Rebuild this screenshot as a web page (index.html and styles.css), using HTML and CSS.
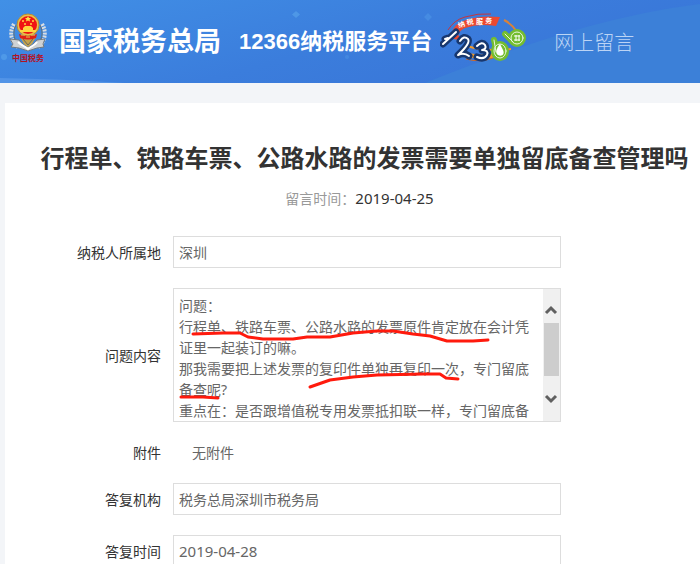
FILE: index.html
```html
<!DOCTYPE html>
<html lang="zh-CN">
  <head>
    <meta charset="UTF-8" />
    <meta name="viewport" content="width=device-width, initial-scale=1.0" />
    <title>网上留言 - 12366纳税服务平台</title>
    <link rel="stylesheet" href="styles.css">
  </head>
  <body>
    <header class="header">
      <!-- Background waves -->
      <svg class="header-bg" viewBox="0 0 700 83" preserveAspectRatio="none" aria-hidden="true">
        <path d="M425 83 Q520 45 590 26 Q650 10 700 4 V83 Z" fill="#3c80d8" />
        <path d="M0 78 Q60 79 125 83 H0 Z" fill="#5294e7" />
        <g fill="#5aa5ec" opacity="0.6">
          <circle cx="4" cy="57" r="3" />
          <path d="M296 11l4 3.500-4 3.500-4-3.500z" />
          <path d="M428 13l4 4-4 4-4-4z" opacity="0.6" />
          <circle cx="347" cy="57" r="2" opacity="0.5" />
        </g>
      </svg>

      <svg class="emblem" width="40" height="56" viewBox="0 0 40 56" role="img" aria-label="中国税务">
        <path d="M6 13C1 21 3 31 10 36M34 13c5 8 3 18-4 23" fill="none" stroke="#d9dde2" stroke-width="4" stroke-dasharray="2 1" />
        <path d="M8 14C4 22 6 30 12 34M32 14c4 8 2 16-4 20" fill="none" stroke="#69706f" stroke-width="1" />
        <path d="M2 28l9 1c3 4 6 6 9 7 3-1 6-3 9-7l8-1-2 5 1 3-7 1-9 3-9-3-8-1 2-3z" fill="#cfd2d4" stroke="#707880" stroke-width="1" />
        <path d="M10 31c4 4 7 4 10 7 3-3 6-3 9-7" fill="none" stroke="#fff" stroke-width="2" />
        <path d="M12 26h16l-4 7-4 3-4-3z" fill="#c5a24c" />
        <path d="M15 28l5 6 5-6" fill="none" stroke="#666b62" stroke-width="1" />
        <circle cx="20" cy="14" r="11" fill="#eac04b" stroke="#ba8c32" stroke-width="1" />
        <circle cx="20" cy="14" r="9" fill="#f01414" />
        <path d="M20 5l1 2h2l-1.500 1.500.5 2-2-1-2 1 .5-2L17 7h2z" fill="#ffe04a" />
        <g fill="#ffd53e">
          <circle cx="15" cy="10" r="1" />
          <circle cx="25" cy="10" r="1" />
          <circle cx="17" cy="13" r="1" />
          <circle cx="23" cy="13" r="1" />
          <path d="M15 17l2-2h6l2 2v2h3v2H12v-2h3z" />
        </g>
        <path d="M11 23q9 4 18 0l-1 4q-8 3-16 0z" fill="#dd2118" />
        <path d="M13 24h4M23 24h4M18 26h4" stroke="#efc34a" stroke-width="1" />
        <text class="emblem-text" x="20" y="50" text-anchor="middle">中国税务</text>
      </svg>

      <span class="org-name">国家税务总局</span>
      <span class="platform-name">12366纳税服务平台</span>

      <svg class="hotline" width="86" height="52" viewBox="0 0 86 52" role="img" aria-label="纳税服务 12366">
        <path d="M20 37q20 11 46 0l1 5q-22 9-43 2z" fill="#f39a28" />
        <path d="M27 34q18 6 44 3" fill="none" stroke="#f39a28" stroke-width="2" />
        <path d="M26 47q14 4 27-1" fill="none" stroke="#c96a2c" stroke-width="1" />
        <path d="M64 8Q72 12 77 20" fill="none" stroke="#d9823a" stroke-width="2" />
        <path d="M12 20Q15 11 26 8 41 3 60 5L56 14Q39 11 25 16 20 18 18 23L24 29 14 27Z" fill="#ec4930" />
        <path d="M8 18Q14 8 25 5 38 1 51 2" fill="none" stroke="#c8343b" stroke-width="1" />
        <g class="hotline-label">
          <text x="19" y="16" transform="rotate(-20 19 16)">纳</text>
          <text x="27" y="13" transform="rotate(-10 27 13)">税</text>
          <text x="36" y="12">服</text>
          <text x="45" y="11" transform="rotate(5 45 11)">务</text>
        </g>
        <g class="digit">
          <path d="M3 32L16 20M8 26L5 27" />
          <path d="M20 29q4-6 8-2 3 4-10 16 6-3 11 1" />
          <path d="M37 34q5-5 8-1 2 4-3 5 7 0 5 5-3 5-10 2" />
        </g>
        <g class="digit-inner">
          <path d="M3 32L16 20M8 26L5 27" />
          <path d="M20 29q4-6 8-2 3 4-10 16 6-3 11 1" />
          <path d="M37 34q5-5 8-1 2 4-3 5 7 0 5 5-3 5-10 2" />
        </g>
        <!-- The two green sixes -->
        <g class="six">
          <path d="M54 28L57 40" />
          <ellipse cx="60" cy="39" rx="6" ry="7" />
          <path d="M65 22L73 30" />
          <circle cx="77" cy="26" r="6" />
        </g>
        <g class="six-inner">
          <path d="M54 28L56 40" />
          <ellipse cx="60" cy="39" rx="6" ry="7" />
          <path d="M65 22L73 30" />
          <circle cx="77" cy="26" r="6" />
        </g>
        <path d="M60 32c-4 5-5 9-2 11 4 2 7-1 5-5z" fill="#fff" />
        <path d="M74 24h6M74 28h6M76 23v6M79 23v6" fill="none" stroke="#fff" stroke-width="1" />
      </svg>

      <a href="#" class="section-link">网上留言</a>
    </header>

    <main class="card">
      <h1 class="title">行程单、铁路车票、公路水路的发票需要单独留底备查管理吗</h1>
      <p class="meta">留言时间：<time class="meta-date" datetime="2019-04-25">2019-04-25</time></p>

      <form class="detail-form">
        <label for="area">纳税人所属地</label>
        <input type="text" id="area" class="field" value="深圳" readonly />

        <label for="question">问题内容</label>
        <div class="field-box">
          <textarea id="question" class="question" readonly>问题：
行程单、铁路车票、公路水路的发票原件肯定放在会计凭证里一起装订的嘛。
那我需要把上述发票的复印件单独再复印一次，专门留底备查呢?
重点在：是否跟增值税专用发票抵扣联一样，专门留底备</textarea>
          <div class="scrollbar" aria-hidden="true">
            <svg width="15" height="12" viewBox="0 0 15 12"><path d="M2 9l5-5 5 5" /></svg>
            <div class="thumb"></div>
            <svg class="arrow-down" width="15" height="12" viewBox="0 0 15 12"><path d="M2 3l5 5 5-5" /></svg>
          </div>
          <!-- Red pen underlines -->
          <svg class="pen-marks" width="388" height="134" viewBox="0 0 388 134" aria-hidden="true">
            <path d="M20 46L50 45H67L75 49 90 51H120L134 49H157L180 45 204 43H220L240 46 257 48 274 53H300L315 52" />
            <path d="M137 99L157 92 180 89 204 87 250 86H267L273 90 285 91" />
            <path d="M8 109H30L45 110" />
          </svg>
        </div>

        <span class="label">附件</span>
        <span class="no-file">无附件</span>

        <label for="agency">答复机构</label>
        <input type="text" id="agency" class="field" value="税务总局深圳市税务局" readonly />

        <label for="replyDate">答复时间</label>
        <input type="text" id="replyDate" class="field field-date" value="2019-04-28" readonly />
      </form>
    </main>
  </body>
</html>
```
FILE: styles.css
```css
/* General styling */
* {
  box-sizing: border-box;
}

body {
  margin: 0;
  font-family: "Noto Sans", "Noto Sans CJK SC", sans-serif;
  font-size: 14px;
  line-height: 21px;
  color: #333;
  background-color: #f3f5f8;
  overflow: hidden;
}

/* Header */
.header {
  position: relative;
  display: flex;
  align-items: center;
  height: 83px;
  padding: 0 8px;
  background: linear-gradient(165deg, #4190e6, #3b7ddc 50%, #3872d6);
  color: #fff;
  white-space: nowrap;
}

.header-bg {
  position: absolute;
  top: 0;
  left: 0;
  width: 100%;
  height: 100%;
}

.emblem,
.org-name,
.platform-name,
.hotline,
.section-link {
  position: relative;
  flex: none;
}

.emblem {
  margin-bottom: 6px;
}

.emblem-text {
  font-family: "Noto Sans CJK SC", sans-serif;
  font-size: 8px;
  font-weight: bold;
  fill: #b3121f;
}

.org-name {
  margin-left: 11px;
  padding-bottom: 4px;
  font-family: "Noto Sans CJK SC", sans-serif;
  font-size: 27px;
  line-height: 32px;
  font-weight: bold;
}

.platform-name {
  margin-left: 18px;
  font-family: "Liberation Sans", "Noto Sans CJK SC", sans-serif;
  font-size: 22px;
  line-height: 32px;
  font-weight: bold;
}

.hotline {
  margin-left: 8px;
  margin-bottom: 8px;
}

.hotline-label {
  font-family: "Noto Sans CJK SC", sans-serif;
  font-size: 7px;
  font-weight: bold;
  fill: #fff;
}

.digit,
.digit-inner,
.six-inner {
  fill: none;
  stroke: #17376f;
  stroke-width: 7px;
  stroke-linecap: round;
  stroke-linejoin: round;
}

.digit-inner {
  stroke: #fff;
  stroke-width: 2px;
}

.six {
  fill: #74bd30;
  stroke: #74bd30;
  stroke-width: 6px;
  stroke-linecap: round;
}

.six-inner {
  stroke: #e9f6dc;
  stroke-width: 1px;
}

.section-link {
  margin-left: 28px;
  font-family: "Noto Sans CJK SC", sans-serif;
  font-size: 20px;
  line-height: 32px;
  font-weight: 300;
  color: #bcd4f5;
  text-decoration: none;
}

/* Message detail */
.card {
  margin: 20px 0 0 5px;
  padding: 37px 0 20px;
  background: #fff;
}

.title {
  margin: 0;
  padding-left: 24px;
  font-size: 24px;
  line-height: 36px;
  font-weight: bold;
  text-align: center;
  white-space: nowrap;
}

.meta {
  margin: 12px 0 0;
  padding-left: 14px;
  text-align: center;
  color: #999;
}

.meta-date {
  font-size: 15px;
  color: #333;
}

.detail-form {
  display: grid;
  grid-template-columns: 156px minmax(0, 388px);
  gap: 20px 12px;
  align-items: center;
  margin-top: 27px;
}

label,
.label {
  text-align: right;
}

.field {
  width: 100%;
  height: 32px;
  padding: 0 5px;
  border: 1px solid #ddd;
  background: #fff;
  font: inherit;
  color: #666;
  outline: none;
}

.field-date {
  font-size: 15px;
}

.field-box {
  position: relative;
  display: flex;
  height: 134px;
  border: 1px solid #ddd;
}

.question {
  flex: 1;
  min-width: 0;
  padding: 6px 10px 0 5px;
  border: none;
  background: none;
  font: inherit;
  color: #666;
  resize: none;
  overflow: hidden;
  outline: none;
}

.scrollbar {
  display: flex;
  flex-direction: column;
  width: 17px;
  padding: 15px 1px 16px;
  background: #f0f0f0;
}

.scrollbar svg {
  flex: none;
  fill: none;
  stroke: #606060;
  stroke-width: 3px;
}

.thumb {
  height: 53px;
  margin-top: 7px;
  background: #cdcdcd;
}

.arrow-down {
  margin-top: auto;
}

.pen-marks {
  position: absolute;
  top: -1px;
  left: -1px;
  fill: none;
  stroke: #ff1a0d;
  stroke-width: 3px;
  stroke-linecap: round;
  stroke-linejoin: round;
  pointer-events: none;
}

.no-file {
  padding-left: 19px;
  color: #666;
}
```
